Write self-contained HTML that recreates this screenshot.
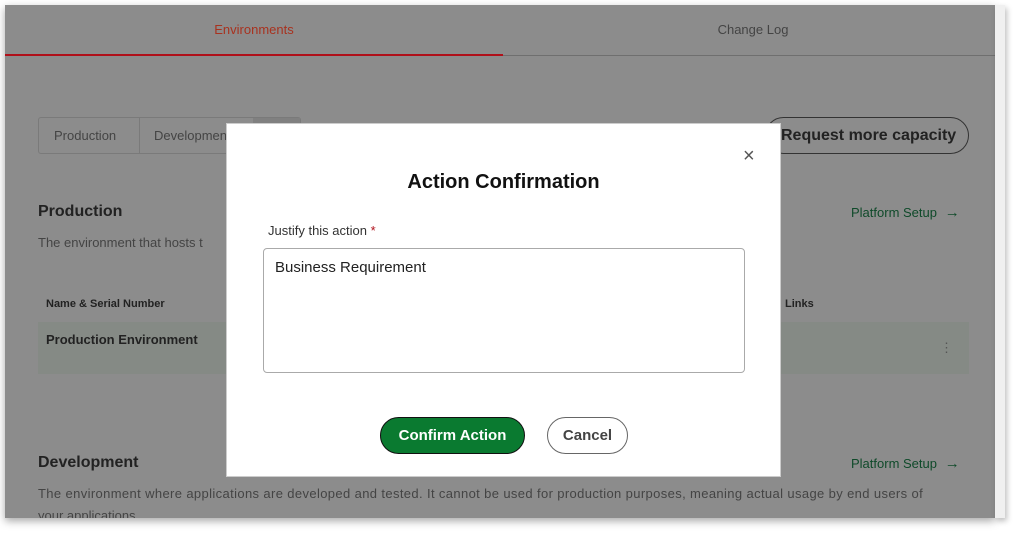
<!DOCTYPE html>
<html><head><style>
*{box-sizing:border-box;margin:0;padding:0}
body{width:1020px;height:533px;background:#fff;position:relative;overflow:hidden;font-family:"Liberation Sans",sans-serif}
.page{position:absolute;left:5px;top:5px;width:990px;height:513px;background:#8c8c8c;overflow:hidden;box-shadow:0 3px 8px rgba(0,0,0,.35)}
.sb{position:absolute;left:995px;top:5px;width:10px;height:513px;background:#f0f0f0;box-shadow:2px 3px 6px rgba(0,0,0,.25)}
.t{position:absolute;white-space:nowrap}
</style></head><body>
<div class="page">
 <div class="t" style="left:0;top:17px;width:498px;text-align:center;color:#a8321f;font-size:13px">Environments</div>
 <div class="t" style="left:498px;top:17px;width:500px;text-align:center;color:#444;font-size:13px">Change Log</div>
 <div style="position:absolute;left:0;top:50px;width:990px;height:1px;background:#6f6f6f"></div>
 <div style="position:absolute;left:0;top:49px;width:498px;height:2px;background:#b0101a"></div>
 <div style="position:absolute;left:33px;top:112px;width:263px;height:37px;border:1px solid #7a7a7a;border-radius:3px"></div>
 <div style="position:absolute;left:134px;top:113px;width:1px;height:35px;background:#7a7a7a"></div>
 <div style="position:absolute;left:248px;top:113px;width:47px;height:35px;background:#808080"></div>
 <div class="t" style="left:49px;top:123px;color:#444;font-size:13px">Production</div>
 <div class="t" style="left:149px;top:123px;color:#444;font-size:13px">Development</div>
 <div style="position:absolute;left:760px;top:112px;width:204px;height:37px;border:1.5px solid #333;border-radius:19px"></div>
 <div class="t" style="left:776px;top:122px;color:#222;font-size:16px;font-weight:bold">Request more capacity</div>
 <div class="t" style="left:33px;top:198px;color:#222;font-size:16px;font-weight:bold">Production</div>
 <div class="t" style="left:33px;top:230px;color:#444;font-size:13px">The environment that hosts t</div>
 <div class="t" style="left:846px;top:199px;color:#0f4a2a;font-size:13px">Platform Setup <span style="font-size:15px;font-weight:bold">&nbsp;→</span></div>
 <div class="t" style="left:41px;top:293px;color:#222;font-size:11px;font-weight:bold">Name &amp; Serial Number</div>
 <div class="t" style="left:780px;top:293px;color:#222;font-size:11px;font-weight:bold">Links</div>
 <div style="position:absolute;left:33px;top:317px;width:931px;height:52px;background:#858a85"></div>
 <div class="t" style="left:41px;top:327px;color:#222;font-size:13px;font-weight:bold">Production Environment</div>
 <div class="t" style="left:935px;top:335px;color:#555;font-size:13px">⋮</div>
 <div class="t" style="left:33px;top:449px;color:#222;font-size:16px;font-weight:bold">Development</div>
 <div class="t" style="left:846px;top:450px;color:#0f4a2a;font-size:13px">Platform Setup <span style="font-size:15px;font-weight:bold">&nbsp;→</span></div>
 <div class="t" style="left:33px;top:481px;color:#444;font-size:13px;letter-spacing:0.37px">The environment where applications are developed and tested. It cannot be used for production purposes, meaning actual usage by end users of</div>
 <div class="t" style="left:33px;top:503px;color:#444;font-size:13px">your applications</div>
</div>
<div class="sb"></div>
<div style="position:absolute;left:226px;top:123px;width:555px;height:354px;background:#fff;border:1px solid #ccc">
 <div class="t" style="left:516px;top:22px;color:#555;font-size:20px;line-height:20px">×</div>
 <div class="t" style="left:0;top:47px;width:553px;text-align:center;color:#111;font-size:20px;font-weight:bold">Action Confirmation</div>
 <div class="t" style="left:41px;top:99px;color:#333;font-size:13px">Justify this action <span style="color:#b0101a">*</span></div>
 <div style="position:absolute;left:36px;top:124px;width:482px;height:125px;border:1px solid #aaa;border-radius:4px"></div>
 <div class="t" style="left:48px;top:135px;color:#222;font-size:15px">Business Requirement</div>
 <div style="position:absolute;left:153px;top:293px;width:145px;height:37px;background:#0a7a30;border:1.5px solid #111;border-radius:19px"></div>
 <div class="t" style="left:153px;top:303px;width:145px;text-align:center;color:#fff;font-size:15px;font-weight:bold">Confirm Action</div>
 <div style="position:absolute;left:320px;top:293px;width:81px;height:37px;background:#fff;border:1.5px solid #666;border-radius:19px"></div>
 <div class="t" style="left:320px;top:303px;width:81px;text-align:center;color:#444;font-size:15px;font-weight:bold">Cancel</div>
</div>
</body></html>
